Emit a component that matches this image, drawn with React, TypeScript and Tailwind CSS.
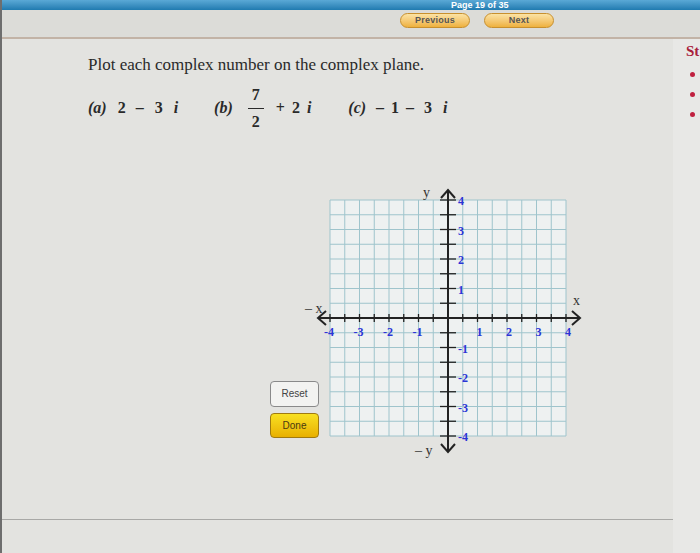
import React from 'react'

const serif = { fontFamily: '"Liberation Serif", "Times New Roman", serif' }

const U = 29.5
const OX = 146
const OY = 134

function Graph() {
  const half = U / 2
  const gridLines: React.ReactNode[] = []
  for (let i = -8; i <= 8; i++) {
    gridLines.push(
      <line key={'v' + i} x1={OX + i * half} y1={OY - 4 * U} x2={OX + i * half} y2={OY + 4 * U} stroke="#9fc4cc" strokeWidth={1} />
    )
    gridLines.push(
      <line key={'h' + i} x1={OX - 4 * U} y1={OY + i * half} x2={OX + 4 * U} y2={OY + i * half} stroke="#9fc4cc" strokeWidth={1} />
    )
  }
  const ticks: React.ReactNode[] = []
  for (let i = -8; i <= 8; i++) {
    if (i === 0) continue
    ticks.push(<line key={'tx' + i} x1={OX + i * half} y1={OY - 4} x2={OX + i * half} y2={OY + 4} stroke="#222" strokeWidth={1.3} />)
    ticks.push(<line key={'ty' + i} x1={OX - 8} y1={OY + i * half} x2={OX + 8} y2={OY + i * half} stroke="#222" strokeWidth={1.3} />)
  }
  const xs = [-4, -3, -2, -1, 1, 2, 3, 4]
  return (
    <svg width={290} height={280} viewBox="0 0 290 280" className="block">
      <rect x={OX - 4 * U} y={OY - 4 * U} width={8 * U} height={8 * U} fill="#eef1f1" />
      {gridLines}
      {/* axes */}
      <line x1={16} y1={OY} x2={278} y2={OY} stroke="#222" strokeWidth={2} />
      <line x1={OX} y1={6} x2={OX} y2={268} stroke="#222" strokeWidth={2} />
      <polyline points={`${24},${OY - 7} ${16},${OY} ${24},${OY + 7}`} fill="none" stroke="#222" strokeWidth={2} />
      <polyline points={`${270},${OY - 7} ${278},${OY} ${270},${OY + 7}`} fill="none" stroke="#222" strokeWidth={2} />
      <polyline points={`${OX - 7},${14} ${OX},${6} ${OX + 7},${14}`} fill="none" stroke="#222" strokeWidth={2} />
      <polyline points={`${OX - 7},${260} ${OX},${268} ${OX + 7},${260}`} fill="none" stroke="#222" strokeWidth={2} />
      {ticks}
      <g style={serif} fill="#2b34d6" fontWeight="bold" fontSize={12}>
        {xs.map((v) => (
          <text key={'lx' + v} x={OX + v * U + (v < 0 ? -1 : 2)} y={OY + 18} textAnchor="middle">{v}</text>
        ))}
        {xs.map((v) => (
          <text key={'ly' + v} x={OX + 10} y={OY - v * U + 5}>{v}</text>
        ))}
      </g>
      <g style={serif} fill="#333" fontSize={14}>
        <text x={3} y={OY - 5}>– x</text>
        <text x={271} y={OY - 13}>x</text>
        <text x={121} y={13}>y</text>
        <text x={113} y={271}>– y</text>
      </g>
    </svg>
  )
}

export default function App() {
  return (
    <div className="w-[700px] h-[553px] overflow-hidden flex flex-col bg-[#e3e3e0] border-l-2 border-[#6e6e6e]" style={{ fontFamily: '"Liberation Sans", Arial, sans-serif' }}>
      {/* top bar */}
      <div className="h-[10px] bg-gradient-to-b from-[#5aa9d6] to-[#1f7bb0] flex items-center">
        <span className="ml-[449px] text-[9px] leading-none font-bold text-white">Page 19 of 35</span>
      </div>
      <div className="h-[29px] bg-[#dcdcd8] border-b-2 border-[#c2b3a6] flex items-start pt-[3px]">
        <button className="ml-[398px] w-[70px] h-[15px] rounded-full border border-[#c8902e] bg-gradient-to-b from-[#fbe3a4] to-[#eeb13c] text-[9px] leading-none font-bold text-[#555] tracking-wide">Previous</button>
        <button className="ml-[14px] w-[70px] h-[15px] rounded-full border border-[#c8902e] bg-gradient-to-b from-[#fbe3a4] to-[#eeb13c] text-[9px] leading-none font-bold text-[#555] tracking-wide">Next</button>
      </div>

      <div className="flex flex-1">
        <div className="flex-1 flex flex-col">
          <div className="pl-[86px] pt-[13px]" style={serif}>
            <p className="text-[17px] text-[#2a2a2a]">Plot each complex number on the complex plane.</p>
            <div className="flex items-center mt-[9px] text-[16px] font-bold text-[#2a2a2a]">
              <span className="italic">(a)</span>
              <span className="ml-[11px]">2</span>
              <span className="ml-[10px]">–</span>
              <span className="ml-[11px]">3</span>
              <span className="ml-[11px] italic">i</span>
              <span className="ml-[36px] italic">(b)</span>
              <span className="ml-[15px] flex flex-col items-center leading-none">
                <span>7</span>
                <span className="w-[16px] border-t border-[#2a2a2a] my-[5px]"></span>
                <span>2</span>
              </span>
              <span className="ml-[12px]">+</span>
              <span className="ml-[7px]">2</span>
              <span className="ml-[7px] italic">i</span>
              <span className="ml-[37px] italic">(c)</span>
              <span className="ml-[10px]">–</span>
              <span className="ml-[7px]">1</span>
              <span className="ml-[7px]">–</span>
              <span className="ml-[10px]">3</span>
              <span className="ml-[11px] italic">i</span>
            </div>
          </div>

          <div className="flex items-start mt-[51px]">
            <div className="ml-[268px] mt-[200px] flex flex-col gap-[6px]">
              <button className="w-[49px] h-[26px] rounded-[4px] border border-[#8a8a8a] bg-[#f3f3f1] text-[10px] text-[#444]">Reset</button>
              <button className="w-[49px] h-[25px] rounded-[4px] border border-[#a07a10] bg-gradient-to-b from-[#f8e020] to-[#e8b000] text-[10px] text-[#4a3a10]">Done</button>
            </div>
            <div className="ml-[-17px] mt-[3px]">
              <Graph />
            </div>
          </div>

          <div className="mt-auto mb-[33px] border-t border-[#a8a8a6]"></div>
        </div>

        <div className="w-[27px] bg-[#e8e8e6] pt-[5px] pl-[13px]" style={serif}>
          <div className="text-[15px] font-bold text-[#a8203c] leading-none">St</div>
          <div className="mt-[13px] flex flex-col gap-[15px] pl-[4px]">
            <span className="w-[5px] h-[5px] rounded-full bg-[#c02040]"></span>
            <span className="w-[5px] h-[5px] rounded-full bg-[#c02040]"></span>
            <span className="w-[5px] h-[5px] rounded-full bg-[#c02040]"></span>
          </div>
        </div>
      </div>
    </div>
  )
}
